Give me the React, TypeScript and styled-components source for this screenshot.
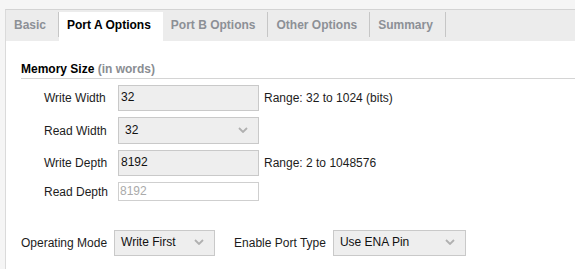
import React from "react";
import styled, { createGlobalStyle } from "styled-components";

const GlobalStyle = createGlobalStyle`
  body {
    margin: 0;
    background: #f5f5f5;
    font-family: "Liberation Sans", Arial, sans-serif;
    font-size: 12px;
    color: #1c1c1c;
  }
`;

const Panel = styled.div`
  margin: 9px 0 0 5px;
  height: 260px;
  border-top: 1px solid #d3d3d3;
  border-left: 1px solid #dadada;
  background: #fff;
  display: flex;
  flex-direction: column;
  overflow: hidden;
`;

const TabBar = styled.div`
  display: flex;
  align-items: flex-start;
  height: 31px;
  box-sizing: border-box;
  padding-top: 2px;
  background: #ececec;
`;

const Tab = styled.div<{ $active?: boolean }>`
  height: 29px;
  box-sizing: border-box;
  padding: 0 12px 3px 8px;
  display: flex;
  align-items: center;
  font-weight: bold;
  color: ${(p) => (p.$active ? "#000" : "#8c9096")};
  background: ${(p) => (p.$active ? "#fff" : "transparent")};
`;

const Separator = styled.span`
  width: 1px;
  height: 25px;
  background: #c6c6c6;
`;

const Content = styled.div`
  padding: 0 0 0 15px;
`;

const Heading = styled.div`
  margin-top: 21px;
  line-height: 14px;
  padding-bottom: 2px;
  border-bottom: 1px solid #d4d4d4;
  font-weight: bold;
  color: #000;
`;

const Hint = styled.span`
  color: #8a8d92;
`;

const Form = styled.div`
  margin-top: 6px;
  padding-left: 23px;
  display: flex;
  flex-direction: column;
  gap: 6px;
`;

const Row = styled.div`
  display: flex;
  align-items: center;
`;

const Label = styled.span`
  width: 74px;
`;

const Field = styled.div<{ $h: number; $readonly?: boolean }>`
  width: 141px;
  height: ${(p) => p.$h}px;
  box-sizing: border-box;
  border: 1px solid ${(p) => (p.$readonly ? "#cfcfcf" : "#c9c9c9")};
  background: ${(p) => (p.$readonly ? "#fff" : "#eeeeee")};
  color: ${(p) => (p.$readonly ? "#aaaaaa" : "#111")};
  display: flex;
  align-items: center;
  padding-left: ${(p) => (p.$readonly ? 1 : 2)}px;
  padding-bottom: 2px;
`;

const Range = styled.span`
  margin-left: 5px;
`;

const Select = styled.div<{ $w: number; $h: number }>`
  width: ${(p) => p.$w}px;
  height: ${(p) => p.$h}px;
  box-sizing: border-box;
  border: 1px solid #c9c9c9;
  background: #eeeeee;
  color: #111;
  display: flex;
  align-items: center;
  justify-content: space-between;
  padding: 0 10px 2px 6px;
`;

const BottomRow = styled.div`
  margin-top: 29px;
  display: flex;
  align-items: center;
`;

const InlineLabel = styled.span<{ $gap?: number }>`
  margin-left: ${(p) => p.$gap || 0}px;
  margin-right: 7px;
`;

const Chevron = () => (
  <svg width="10" height="6" viewBox="0 0 10 6">
    <path d="M1 1 L5 5 L9 1" fill="none" stroke="#b0b0b0" strokeWidth="1.8" />
  </svg>
);

const App = () => {
  return (
    <>
      <GlobalStyle />
      <Panel>
        <TabBar>
          <Tab>Basic</Tab>
          <Separator />
          <Tab $active>Port A Options</Tab>
          <Tab>Port B Options</Tab>
          <Separator />
          <Tab>Other Options</Tab>
          <Separator />
          <Tab>Summary</Tab>
          <Separator />
        </TabBar>
        <Content>
          <Heading>
            Memory Size <Hint>(in words)</Hint>
          </Heading>
          <Form>
            <Row>
              <Label>Write Width</Label>
              <Field $h={26}>32</Field>
              <Range>Range: 32 to 1024 (bits)</Range>
            </Row>
            <Row>
              <Label>Read Width</Label>
              <Select $w={141} $h={27}>
                32
                <Chevron />
              </Select>
            </Row>
            <Row>
              <Label>Write Depth</Label>
              <Field $h={26}>8192</Field>
              <Range>Range: 2 to 1048576</Range>
            </Row>
            <Row>
              <Label>Read Depth</Label>
              <Field $h={19} $readonly>
                8192
              </Field>
            </Row>
          </Form>
          <BottomRow>
            <InlineLabel>Operating Mode</InlineLabel>
            <Select $w={101} $h={26}>
              Write First
              <Chevron />
            </Select>
            <InlineLabel $gap={19}>Enable Port Type</InlineLabel>
            <Select $w={133} $h={26}>
              Use ENA Pin
              <Chevron />
            </Select>
          </BottomRow>
        </Content>
      </Panel>
    </>
  );
};

export default App;
